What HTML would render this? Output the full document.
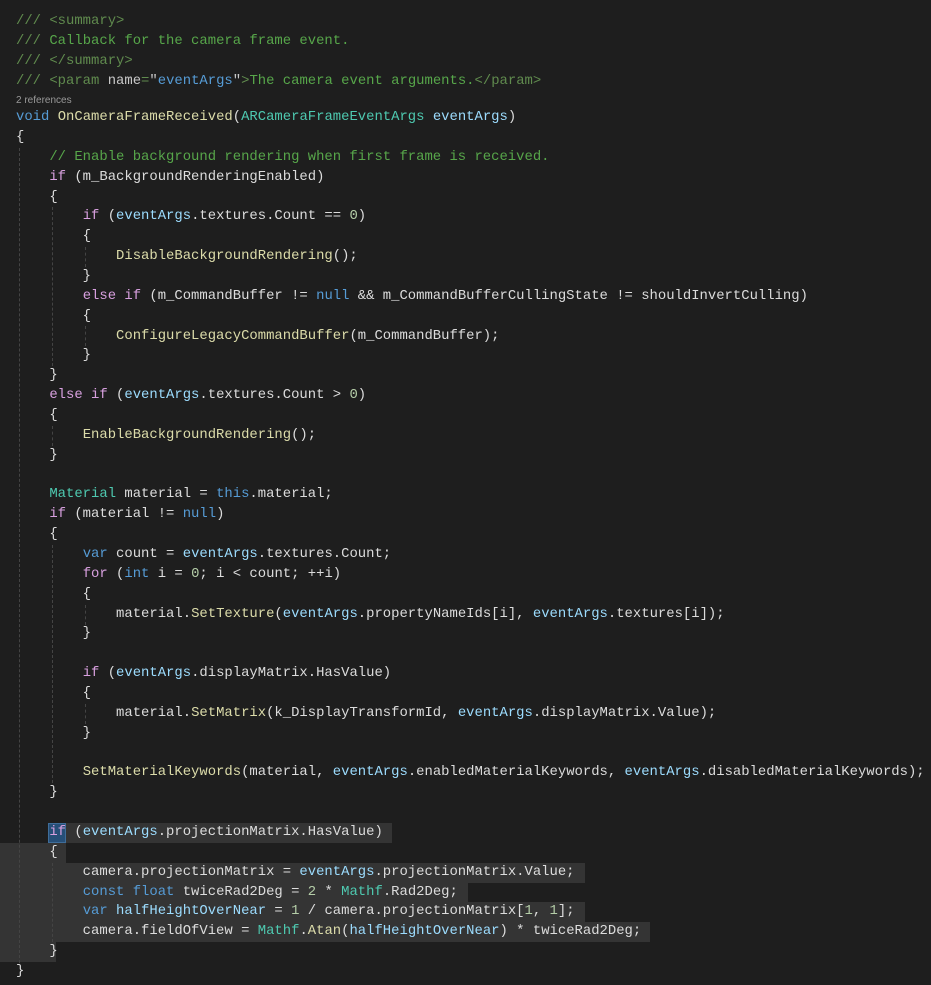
<!DOCTYPE html>
<html><head><meta charset="utf-8"><style>
body{margin:0;background:#1e1e1e;width:931px;height:985px;overflow:hidden;position:relative;}
.c{position:absolute;left:16px;font-family:"Liberation Mono",monospace;font-size:13.9px;line-height:19.86px;white-space:normal;color:#dcdcdc;}
.c div{height:19.86px;white-space:pre;}
.k{color:#569cd6}.f{color:#d8a0df}.m{color:#dcdcaa}.t{color:#4ec9b0}.p{color:#9cdcfe}.n{color:#b5cea8}
.g{color:#57a64a}.d{color:#608b4e}.a{color:#c8c8c8}
.refs{position:absolute;left:16px;top:95px;font-family:"Liberation Sans",sans-serif;font-size:10px;color:#999;}
.gd{position:absolute;width:0;border-left:1px dashed #444;}
.sel{position:absolute;background:#343434;height:20px;}
.ifb{position:absolute;background:#264f78;border:1px solid #3f6d99;}
</style></head><body>
<div class="sel" style="left:48px;width:344px;top:823px"></div>
<div class="sel" style="left:0;width:66px;top:843px"></div>
<div class="sel" style="left:0;width:585px;top:863px"></div>
<div class="sel" style="left:0;width:468px;top:883px"></div>
<div class="sel" style="left:0;width:585px;top:902px"></div>
<div class="sel" style="left:0;width:650px;top:922px"></div>
<div class="sel" style="left:0;width:56px;top:942px"></div>
<div class="ifb" style="left:48px;top:823px;width:16px;height:18px"></div>

<div class="gd" style="left:19px;top:148px;height:815px"></div>
<div class="gd" style="left:52px;top:207px;height:159px"></div>
<div class="gd" style="left:52px;top:426px;height:20px"></div>
<div class="gd" style="left:52px;top:545px;height:238px"></div>
<div class="gd" style="left:52px;top:863px;height:79px"></div>
<div class="gd" style="left:85px;top:247px;height:20px"></div>
<div class="gd" style="left:85px;top:326px;height:20px"></div>
<div class="gd" style="left:85px;top:605px;height:20px"></div>
<div class="gd" style="left:85px;top:704px;height:20px"></div>

<div class="c" style="top:12px">
<div><span class="d">/// &lt;summary&gt;</span></div>
<div><span class="d">///</span><span class="g"> Callback for the camera frame event.</span></div>
<div><span class="d">/// &lt;/summary&gt;</span></div>
<div><span class="d">/// &lt;param </span><span class="a">name</span><span class="d">=</span><span class="a">"</span><span class="k">eventArgs</span><span class="a">"</span><span class="d">&gt;</span><span class="g">The camera event arguments.</span><span class="d">&lt;/param&gt;</span></div>
</div>
<div class="refs">2 references</div>
<div class="c" style="top:108.1px">
<div><span class="k">void</span> <span class="m">OnCameraFrameReceived</span>(<span class="t">ARCameraFrameEventArgs</span> <span class="p">eventArgs</span>)</div>
<div>{</div>
<div>    <span class="g">// Enable background rendering when first frame is received.</span></div>
<div>    <span class="f">if</span> (m_BackgroundRenderingEnabled)</div>
<div>    {</div>
<div>        <span class="f">if</span> (<span class="p">eventArgs</span>.textures.Count == <span class="n">0</span>)</div>
<div>        {</div>
<div>            <span class="m">DisableBackgroundRendering</span>();</div>
<div>        }</div>
<div>        <span class="f">else if</span> (m_CommandBuffer != <span class="k">null</span> &amp;&amp; m_CommandBufferCullingState != shouldInvertCulling)</div>
<div>        {</div>
<div>            <span class="m">ConfigureLegacyCommandBuffer</span>(m_CommandBuffer);</div>
<div>        }</div>
<div>    }</div>
<div>    <span class="f">else if</span> (<span class="p">eventArgs</span>.textures.Count &gt; <span class="n">0</span>)</div>
<div>    {</div>
<div>        <span class="m">EnableBackgroundRendering</span>();</div>
<div>    }</div>
<div> </div>
<div>    <span class="t">Material</span> material = <span class="k">this</span>.material;</div>
<div>    <span class="f">if</span> (material != <span class="k">null</span>)</div>
<div>    {</div>
<div>        <span class="k">var</span> count = <span class="p">eventArgs</span>.textures.Count;</div>
<div>        <span class="f">for</span> (<span class="k">int</span> i = <span class="n">0</span>; i &lt; count; ++i)</div>
<div>        {</div>
<div>            material.<span class="m">SetTexture</span>(<span class="p">eventArgs</span>.propertyNameIds[i], <span class="p">eventArgs</span>.textures[i]);</div>
<div>        }</div>
<div> </div>
<div>        <span class="f">if</span> (<span class="p">eventArgs</span>.displayMatrix.HasValue)</div>
<div>        {</div>
<div>            material.<span class="m">SetMatrix</span>(k_DisplayTransformId, <span class="p">eventArgs</span>.displayMatrix.Value);</div>
<div>        }</div>
<div> </div>
<div>        <span class="m">SetMaterialKeywords</span>(material, <span class="p">eventArgs</span>.enabledMaterialKeywords, <span class="p">eventArgs</span>.disabledMaterialKeywords);</div>
<div>    }</div>
<div> </div>
<div>    <span class="f">if</span> (<span class="p">eventArgs</span>.projectionMatrix.HasValue)</div>
<div>    {</div>
<div>        camera.projectionMatrix = <span class="p">eventArgs</span>.projectionMatrix.Value;</div>
<div>        <span class="k">const float</span> twiceRad2Deg = <span class="n">2</span> * <span class="t">Mathf</span>.Rad2Deg;</div>
<div>        <span class="k">var</span> <span class="p">halfHeightOverNear</span> = <span class="n">1</span> / camera.projectionMatrix[<span class="n">1</span>, <span class="n">1</span>];</div>
<div>        camera.fieldOfView = <span class="t">Mathf</span>.<span class="m">Atan</span>(<span class="p">halfHeightOverNear</span>) * twiceRad2Deg;</div>
<div>    }</div>
<div>}</div>
</div>
</body></html>
